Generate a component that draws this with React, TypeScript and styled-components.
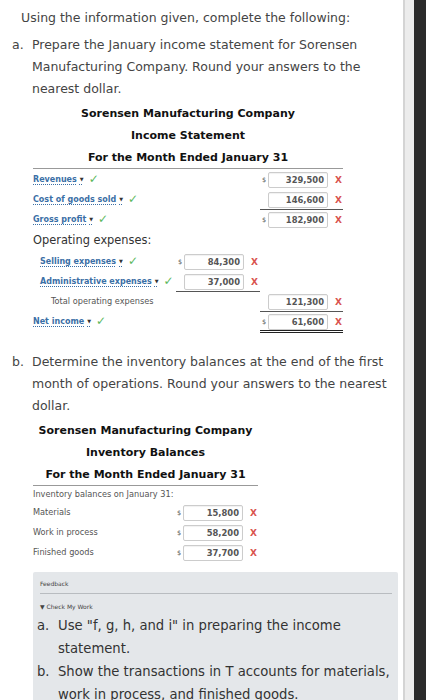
import styled, { createGlobalStyle } from "styled-components";

const GlobalStyle = createGlobalStyle`
  html, body {
    margin: 0;
    padding: 0;
    background: #ffffff;
  }
  body {
    font-family: "DejaVu Sans", Verdana, sans-serif;
    color: #444;
  }
`;

const Page = styled.div`
  display: flex;
  width: 426px;
  height: 700px;
  overflow: hidden;
`;

const Content = styled.div`
  width: 403px;
  flex-shrink: 0;
  background: #fff;
  padding: 7px 0 0 0;
  box-sizing: border-box;
`;

const ScrollStrip = styled.div`
  width: 9px;
  flex-shrink: 0;
  background: #ececec;
  border-left: 2px solid #d4d4d4;
`;

const DarkStrip = styled.div`
  flex: 1;
  background: #2b2b2b;
`;

const Intro = styled.p`
  margin: 0 0 5px 21px;
  font-size: 12.5px;
  line-height: 22px;
  color: #444;
`;

const PartList = styled.ol`
  margin: 0;
  padding: 0;
  list-style: none;
`;

const PartItem = styled.li`
  display: flex;
  padding-left: 12px;
`;

const PartLetter = styled.span`
  width: 20px;
  flex-shrink: 0;
  font-size: 12.5px;
  line-height: 22px;
`;

const PartBody = styled.div`
  flex: 1;
`;

const PartText = styled.p`
  margin: 0 0 3px 0;
  font-size: 12.5px;
  line-height: 22px;
  padding-right: 10px;
  color: #444;
`;

const Statement = styled.div<{ $width: number }>`
  width: ${(p) => p.$width}px;
  margin-left: 1px;
`;

const Heading = styled.div`
  text-align: center;
  font-weight: bold;
  font-size: 11px;
  line-height: 22px;
  color: #111;
`;

const HeadingRule = styled.div`
  border-top: 1px solid #999;
  margin-top: -1px;
`;

const Row = styled.div<{ $h?: number }>`
  display: flex;
  align-items: center;
  height: ${(p) => p.$h ?? 20}px;
`;

const Label = styled.div<{ $indent?: number }>`
  flex: 1;
  min-width: 0;
  display: flex;
  align-items: center;
  white-space: nowrap;
  padding-left: ${(p) => p.$indent ?? 0}px;
  font-size: 8.2px;
  color: #555;
`;

const PlainLabel = styled.div`
  font-size: 11.4px;
  color: #333;
  height: 22px;
  line-height: 22px;
`;

const LinkLabel = styled.span`
  font-size: 8px;
  font-weight: bold;
  color: #3b6fa6;
  white-space: nowrap;
  text-decoration: underline dotted;
  text-underline-offset: 2px;
`;

const Caret = styled.span`
  font-size: 5px;
  margin-left: 3px;
  vertical-align: middle;
  color: #333;
`;

const Check = styled.span`
  color: #5cb85c;
  font-size: 12px;
  margin-left: 5px;
  font-weight: bold;
`;

const Cell = styled.div<{ $rule?: "top"; $w?: number }>`
  width: ${(p) => p.$w ?? 83}px;
  flex-shrink: 0;
  display: flex;
  align-items: center;
  height: 20px;
  box-sizing: border-box;
  border-top: ${(p) => (p.$rule === "top" ? "1px solid #555" : "1px solid transparent")};
`;

const Dollar = styled.span`
  width: 6px;
  font-size: 6.5px;
  color: #666;
  padding-left: 2px;
`;

const Amount = styled.div`
  width: 60px;
  height: 16px;
  border: 1px solid #ccc;
  border-radius: 2px;
  background: #fff;
  box-sizing: border-box;
  font-size: 8.4px;
  font-weight: bold;
  color: #555;
  text-align: right;
  line-height: 14px;
  padding-right: 3px;
  box-shadow: inset 0 1px 1px rgba(0, 0, 0, 0.06);
`;

const Cross = styled.span`
  color: #d9534f;
  font-size: 9px;
  font-weight: bold;
  margin-left: 7px;
`;

const DoubleRule = styled.div`
  margin-left: auto;
  width: 83px;
  border-top: 3px double #222;
  height: 0;
  margin-top: -1px;
`;

const Spacer = styled.div<{ $h: number }>`
  height: ${(p) => p.$h}px;
`;

const Feedback = styled.div`
  margin: 10px 5px 0 33px;
  background: #e4e7ea;
  border-radius: 2px;
  padding: 8px 6px 10px 7px;
`;

const FeedbackTitle = styled.div`
  font-size: 6px;
  line-height: 7px;
  color: #444;
  padding-bottom: 6px;
  border-bottom: 1px solid #b8bcc0;
`;

const CheckWork = styled.div`
  font-size: 6px;
  line-height: 7px;
  color: #444;
  margin-top: 9px;
`;

const HintList = styled.ol`
  margin: 4px 0 0 -3px;
  padding: 0;
  list-style: none;
`;

const HintItem = styled.li`
  display: flex;
  font-size: 13.2px;
  line-height: 23px;
  color: #333;
`;

const HintLetter = styled.span`
  width: 21px;
  flex-shrink: 0;
`;

type Entry = { value: string; dollar?: boolean; rule?: "top" };

function AmountCell({ entry, w }: { entry?: Entry; w?: number }) {
  if (!entry) return <Cell $w={w} />;
  return (
    <Cell $rule={entry.rule} $w={w}>
      <Dollar>{entry.dollar ? "$" : ""}</Dollar>
      <Amount>{entry.value}</Amount>
      <Cross>X</Cross>
    </Cell>
  );
}

function LinkRow({
  label,
  indent,
  sub,
  main,
}: {
  label: string;
  indent?: number;
  sub?: Entry;
  main?: Entry;
}) {
  return (
    <Row>
      <Label $indent={indent}>
        <LinkLabel>
          {label}
          <Caret>▼</Caret>
        </LinkLabel>
        <Check>✓</Check>
      </Label>
      <AmountCell entry={sub} w={84} />
      <AmountCell entry={main} />
    </Row>
  );
}

export default function App() {
  return (
    <>
      <GlobalStyle />
      <Page>
        <Content>
          <Intro>Using the information given, complete the following:</Intro>
          <PartList>
            <PartItem>
              <PartLetter>a.</PartLetter>
              <PartBody>
                <PartText>
                  Prepare the January income statement for Sorensen Manufacturing Company. Round your
                  answers to the nearest dollar.
                </PartText>
                <Statement $width={310}>
                  <Heading>Sorensen Manufacturing Company</Heading>
                  <Heading>Income Statement</Heading>
                  <Heading>For the Month Ended January 31</Heading>
                  <HeadingRule />
                  <LinkRow label="Revenues" main={{ value: "329,500", dollar: true }} />
                  <LinkRow label="Cost of goods sold" main={{ value: "146,600" }} />
                  <LinkRow label="Gross profit" main={{ value: "182,900", dollar: true, rule: "top" }} />
                  <PlainLabel>Operating expenses:</PlainLabel>
                  <LinkRow label="Selling expenses" indent={7} sub={{ value: "84,300", dollar: true }} />
                  <LinkRow label="Administrative expenses" indent={7} sub={{ value: "37,000" }} />
                  <Row>
                    <Label $indent={18}>Total operating expenses</Label>
                    <Cell $rule="top" $w={84} />
                    <AmountCell entry={{ value: "121,300" }} />
                  </Row>
                  <LinkRow label="Net income" main={{ value: "61,600", dollar: true, rule: "top" }} />
                  <DoubleRule />
                </Statement>
                <Spacer $h={18} />
              </PartBody>
            </PartItem>
            <PartItem>
              <PartLetter>b.</PartLetter>
              <PartBody>
                <PartText>
                  Determine the inventory balances at the end of the first month of operations. Round
                  your answers to the nearest dollar.
                </PartText>
                <Statement $width={225}>
                  <Heading>Sorensen Manufacturing Company</Heading>
                  <Heading>Inventory Balances</Heading>
                  <Heading>For the Month Ended January 31</Heading>
                  <HeadingRule />
                  <Row $h={16}>
                    <Label>Inventory balances on January 31:</Label>
                  </Row>
                  <Row>
                    <Label>Materials</Label>
                    <AmountCell entry={{ value: "15,800", dollar: true }} />
                  </Row>
                  <Row>
                    <Label>Work in process</Label>
                    <AmountCell entry={{ value: "58,200", dollar: true }} />
                  </Row>
                  <Row>
                    <Label>Finished goods</Label>
                    <AmountCell entry={{ value: "37,700", dollar: true }} />
                  </Row>
                </Statement>
              </PartBody>
            </PartItem>
          </PartList>
          <Feedback>
            <FeedbackTitle>Feedback</FeedbackTitle>
            <CheckWork>▼ Check My Work</CheckWork>
            <HintList>
              <HintItem>
                <HintLetter>a.</HintLetter>
                <span>Use "f, g, h, and i" in preparing the income statement.</span>
              </HintItem>
              <HintItem>
                <HintLetter>b.</HintLetter>
                <span>Show the transactions in T accounts for materials, work in process, and finished goods.</span>
              </HintItem>
            </HintList>
          </Feedback>
        </Content>
        <ScrollStrip />
        <DarkStrip />
      </Page>
    </>
  );
}
